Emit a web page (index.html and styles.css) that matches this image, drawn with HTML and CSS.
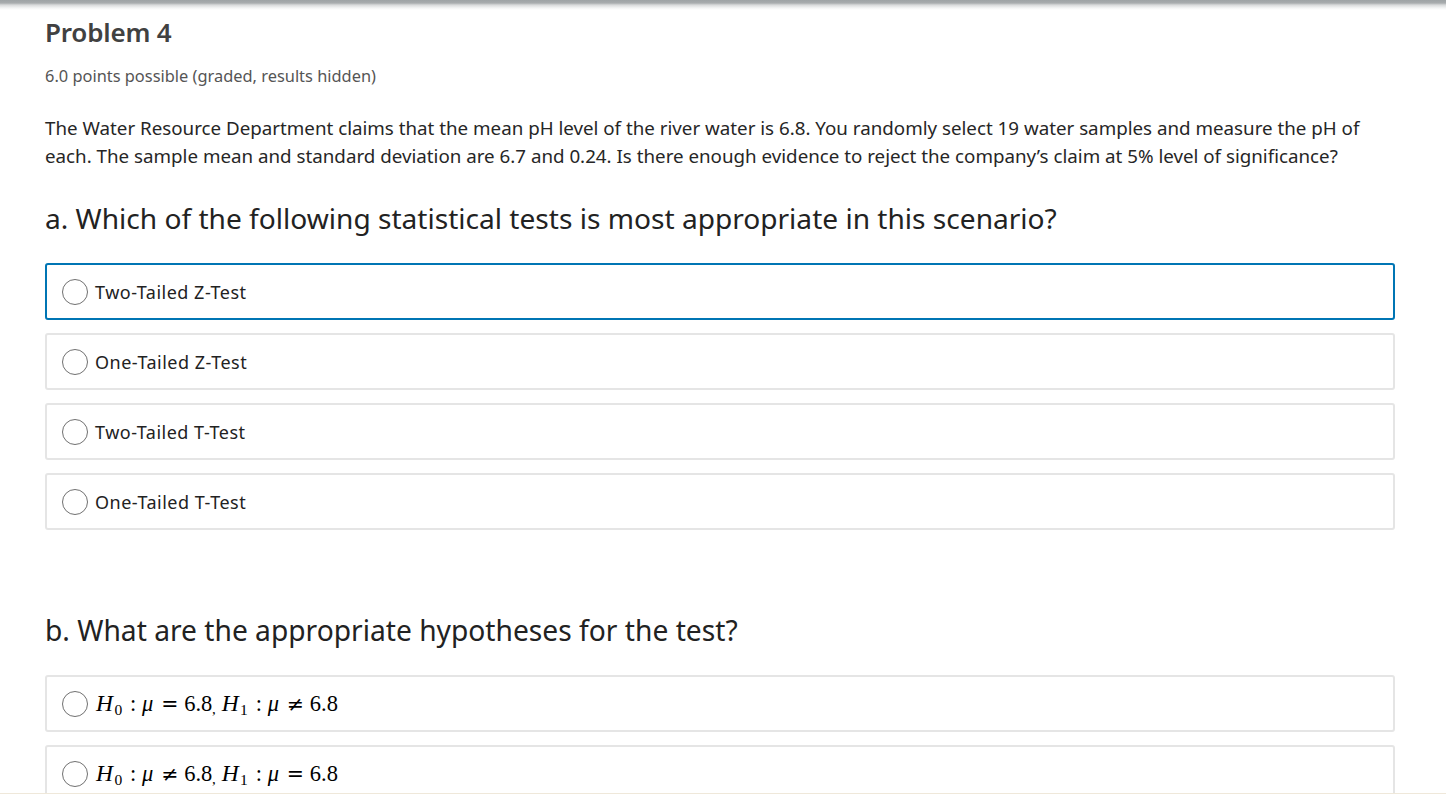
FILE: index.html
```html
<!DOCTYPE html>
<html>
<head>
<meta charset="utf-8">
<link rel="stylesheet" href="styles.css">
</head>
<body>
<div class="topbar"></div>
<main class="problem">
  <h2 class="title">Problem 4</h2>
  <div class="points">6.0 points possible (graded, results hidden)</div>
  <p class="statement">The Water Resource Department claims that the mean pH level of the river water is 6.8. You randomly select 19 water samples and measure the pH of each. The sample mean and standard deviation are 6.7 and 0.24. Is there enough evidence to reject the company’s claim at 5% level of significance?</p>

  <h3 class="question">a. Which of the following statistical tests is most appropriate in this scenario?</h3>
  <div class="choices">
    <label class="choice focused"><span class="radio"></span><span class="label">Two-Tailed Z-Test</span></label>
    <label class="choice"><span class="radio"></span><span class="label">One-Tailed Z-Test</span></label>
    <label class="choice"><span class="radio"></span><span class="label">Two-Tailed T-Test</span></label>
    <label class="choice"><span class="radio"></span><span class="label">One-Tailed T-Test</span></label>
  </div>

  <h3 class="question second">b. What are the appropriate hypotheses for the test?</h3>
  <div class="choices">
    <label class="choice"><span class="radio"></span><span class="math"><i class="tk h">H</i><span class="tk sb">0</span><span class="tk colon">:</span><i class="tk mu">μ</i><span class="tk rel">=</span><span class="tk num">6.8</span><span class="tk cm">,</span><i class="tk h">H</i><span class="tk sb">1</span><span class="tk colon">:</span><i class="tk mu">μ</i><span class="tk rel">≠</span><span class="tk num">6.8</span></span></label>
    <label class="choice"><span class="radio"></span><span class="math"><i class="tk h">H</i><span class="tk sb">0</span><span class="tk colon">:</span><i class="tk mu">μ</i><span class="tk rel">≠</span><span class="tk num">6.8</span><span class="tk cm">,</span><i class="tk h">H</i><span class="tk sb">1</span><span class="tk colon">:</span><i class="tk mu">μ</i><span class="tk rel">=</span><span class="tk num">6.8</span></span></label>
  </div>
</main>
<div class="bottomline"></div>
</body>
</html>
```
FILE: styles.css
```css
html, body {
  margin: 0;
  padding: 0;
  background: #fff;
  overflow: hidden;
}
body {
  height: 794px;
  position: relative;
  font-family: "Noto Sans", "Open Sans", sans-serif;
  color: #313131;
}
.topbar {
  height: 10px;
  background: linear-gradient(#9ea3a5 0, #a8acae 3px, #d8dadb 5px, #f4f5f5 8px, #fff 10px);
}
.problem {
  padding: 0 51px 0 45px;
}
.title {
  margin: 5px 0 0 0;
  font-size: 26px;
  font-weight: 600;
  color: #414141;
  line-height: 34px;
  letter-spacing: -0.2px;
}
.points {
  margin-top: 15px;
  font-size: 16.4px;
  color: #555;
  line-height: 24px;
}
.statement {
  margin: 26px 0 0 0;
  font-size: 18.75px;
  line-height: 28px;
  color: #262626;
}
.question {
  margin: 28px 0 0 0;
  font-size: 28.1px;
  font-weight: 400;
  line-height: 40px;
  color: #222;
}
.question.second {
  margin-top: 80px;
  font-size: 28.2px;
}
.choices {
  margin-top: 25px;
  display: flex;
  flex-direction: column;
  gap: 13px;
}
.choice {
  display: flex;
  align-items: center;
  height: 53px;
  border: 2px solid #e5e5e5;
  border-radius: 3px;
  padding-left: 15px;
  font-size: 18px;
  letter-spacing: 0.5px;
  color: #222;
}
.choice.focused {
  border-color: #0075b4;
}
.radio {
  width: 26px;
  height: 26px;
  box-sizing: border-box;
  border: 1.5px solid #707070;
  border-radius: 50%;
  margin-right: 7px;
  flex: none;
}
.label {
  line-height: 24px;
}
.math {
  font-family: "Liberation Serif", "DejaVu Serif", serif;
  font-size: 22.5px;
  color: #000;
  white-space: nowrap;
  letter-spacing: 0;
  display: flex;
  align-items: baseline;
  padding-left: 1px;
}
.math .tk {
  display: inline-block;
  font-style: normal;
}
.math .h {
  font-style: italic;
  width: 19.4px;
  font-size: 23.5px;
}
.math .mu {
  font-style: italic;
  width: 13.1px;
  margin: 0 6px;
}
.math .sb {
  font-size: 15.5px;
  width: 8.7px;
  position: relative;
  top: 3.5px;
  left: -1px;
}
.math .colon {
  width: 6px;
  text-align: center;
  margin-left: 6px;
}
.math .rel {
  font-family: "DejaVu Sans", sans-serif;
  font-size: 20.5px;
  width: 17px;
  text-align: center;
  margin-right: 6px;
}
.math .num {
  width: 27.9px;
}
.math .cm {
  width: 6px;
  margin-right: 3.6px;
  font-size: 15px;
  position: relative;
  top: 3px;
  left: 0;
}
.bottomline {
  position: absolute;
  left: 0;
  right: 0;
  bottom: 0;
  height: 1px;
  background: #efe8da;
}
```
